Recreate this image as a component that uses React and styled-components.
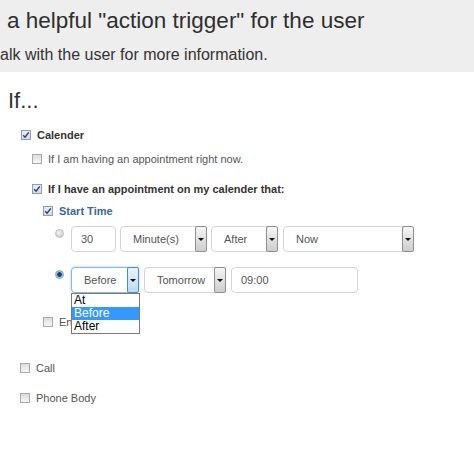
import styled, { createGlobalStyle } from "styled-components";

const GlobalStyle = createGlobalStyle`
  body {
    margin: 0;
    background: #fff;
    font-family: "Liberation Sans", Arial, Helvetica, sans-serif;
    color: #333;
  }
`;

export default function App() {
  return (
    <>
      <GlobalStyle />
      <Header>
        <Title>a helpful "action trigger" for the user</Title>
        <Subtitle>alk with the user for more information.</Subtitle>
      </Header>
      <Main>
        <Heading>If...</Heading>
        <Group $indent={13} $top={12}>
          <CheckRow label="Calender" checked />
          <Group $indent={11}>
            <CheckRow label="If I am having an appointment right now." $top={8} />
            <CheckRow label="If I have an appointment on my calender that:" checked $top={14} />
            <Group $indent={11}>
              <CheckRow label="Start Time" checked accent $top={6} />
              <OptionRow $top={7}>
                <Radio />
                <Field $w={45}>30</Field>
                <Select w={87} value="Minute(s)" />
                <Select w={67} value="After" />
                <Select w={131} value="Now" gap={5} />
              </OptionRow>
              <OptionRow $top={15}>
                <Radio $on />
                <SelectWrap>
                  <Select w={68} value="Before" focus />
                  <Popup>
                    {["At", "Before", "After"].map((opt) => (
                      <PopupItem key={opt} $active={opt === "Before"}>
                        {opt}
                      </PopupItem>
                    ))}
                  </Popup>
                </SelectWrap>
                <Select w={82} value="Tomorrow" gap={5} />
                <Field $w={127} $gap={5}>09:00</Field>
              </OptionRow>
              {/* the open dropdown above lies over most of this label */}
              <CheckRow label="End Time" $top={21} />
            </Group>
          </Group>
        </Group>
        <Group $indent={12} $top={30}>
          <CheckRow label="Call" />
          <CheckRow label="Phone Body" $top={14} />
        </Group>
      </Main>
    </>
  );
}

function CheckRow({ label, checked, accent, $top = 0 }) {
  return (
    <Row $top={$top}>
      <Box $checked={checked}>
        {checked && (
          <svg width="8" height="8" viewBox="0 0 8 8">
            <path d="M1.2 4.2 L3.1 6.2 L6.8 1.3" fill="none" stroke="#2b3f6c" strokeWidth="1.4" />
          </svg>
        )}
      </Box>
      <Label $checked={checked} $accent={accent}>
        {label}
      </Label>
    </Row>
  );
}

function Select({ w, value, focus, gap }) {
  return (
    <SelectBox $w={w} $focus={focus} $gap={gap}>
      <SelectText>{value}</SelectText>
      <Arrow $focus={focus}>
        <Caret />
      </Arrow>
    </SelectBox>
  );
}

const Header = styled.header`
  background: #eeeeee;
  height: 72px;
  box-sizing: border-box;
  padding-top: 7px;
`;

const Title = styled.h1`
  margin: 0 0 0 7px;
  font-size: 22.5px;
  line-height: 28px;
  font-weight: normal;
  color: #2f2f2f;
`;

const Subtitle = styled.p`
  margin: 10px 0 0;
  font-size: 16px;
  line-height: 20px;
  color: #333;
`;

const Main = styled.main`
  padding-left: 8px;
`;

const Heading = styled.h2`
  margin: 15px 0 0;
  font-size: 22px;
  line-height: 28px;
  font-weight: normal;
  color: #333;
`;

const Group = styled.div`
  display: flex;
  flex-direction: column;
  margin-left: ${(p) => p.$indent || 0}px;
  margin-top: ${(p) => p.$top || 0}px;
`;

const Row = styled.div`
  display: flex;
  align-items: center;
  height: 16px;
  margin-top: ${(p) => p.$top}px;
`;

const Box = styled.span`
  width: 10px;
  height: 10px;
  box-sizing: border-box;
  border: 1px solid ${(p) => (p.$checked ? "#8e9bb3" : "#a9a9a9")};
  background: ${(p) =>
    p.$checked
      ? "linear-gradient(#e9edf4, #d3dae6)"
      : "linear-gradient(#dcdcdc, #f7f7f7)"};
  display: flex;
  align-items: center;
  justify-content: center;
  flex-shrink: 0;
`;

const Label = styled.span`
  margin-left: 6px;
  font-size: 11px;
  white-space: nowrap;
  font-weight: ${(p) => (p.$checked ? "bold" : "normal")};
  color: ${(p) => (p.$accent ? "#3b6798" : p.$checked ? "#333" : "#555")};
`;

const OptionRow = styled.div`
  display: flex;
  align-items: flex-start;
  gap: 4px;
  margin-top: ${(p) => p.$top}px;
  padding-left: 12px;
`;

const Radio = styled.span`
  width: 9px;
  height: 9px;
  margin: 3px 3px 0 0;
  border-radius: 50%;
  box-sizing: border-box;
  flex-shrink: 0;
  border: 1px solid ${(p) => (p.$on ? "#7fa6cc" : "#bdbdbd")};
  background: ${(p) =>
    p.$on
      ? "radial-gradient(circle, #1f3f6e 0 2px, #8fb6dc 2.5px, #cfe2f3 100%)"
      : "radial-gradient(circle at 40% 35%, #f4f4f4, #c4c4c4)"};
`;

const Field = styled.div`
  width: ${(p) => p.$w}px;
  height: 26px;
  margin-left: ${(p) => (p.$gap ? p.$gap - 4 : 0)}px;
  box-sizing: border-box;
  border: 1px solid #d4d4d4;
  border-radius: 4px;
  padding-left: 9px;
  display: flex;
  align-items: center;
  font-size: 11px;
  color: #555;
  background: #fff;
`;

const SelectWrap = styled.div`
  position: relative;
`;

const SelectBox = styled.div`
  width: ${(p) => p.$w}px;
  height: 26px;
  margin-left: ${(p) => (p.$gap ? p.$gap - 4 : 0)}px;
  box-sizing: border-box;
  display: flex;
  border: 1px solid ${(p) => (p.$focus ? "#8ab8e0" : "#d4d4d4")};
  border-radius: 4px;
  background: #fff;
  box-shadow: ${(p) => (p.$focus ? "0 0 3px rgba(102, 175, 233, 0.6)" : "none")};
`;

const SelectText = styled.span`
  flex: 1;
  padding-left: 12px;
  display: flex;
  align-items: center;
  font-size: 11px;
  color: #555;
`;

const Arrow = styled.span`
  width: 12px;
  margin: -1px -1px -1px 0;
  box-sizing: border-box;
  border: 1px solid ${(p) => (p.$focus ? "#4f8cc2" : "#8f8f8f")};
  border-radius: 2px;
  background: ${(p) =>
    p.$focus
      ? "linear-gradient(#eaf4fc, #bcdaf2)"
      : "linear-gradient(#f6f6f6, #cdcdcd)"};
  display: flex;
  align-items: center;
  justify-content: center;
`;

const Caret = styled.span`
  width: 0;
  height: 0;
  border-left: 3px solid transparent;
  border-right: 3px solid transparent;
  border-top: 3px solid #111;
`;

const Popup = styled.ul`
  position: absolute;
  top: 100%;
  left: 0;
  width: 69px;
  margin: 0;
  padding: 0;
  list-style: none;
  box-sizing: border-box;
  border: 1px solid #7a7a7a;
  background: #fff;
  z-index: 2;
`;

const PopupItem = styled.li`
  height: 13px;
  line-height: 13px;
  padding-left: 2px;
  font-size: 12px;
  color: ${(p) => (p.$active ? "#fff" : "#000")};
  background: ${(p) => (p.$active ? "#3399ff" : "transparent")};
`;
